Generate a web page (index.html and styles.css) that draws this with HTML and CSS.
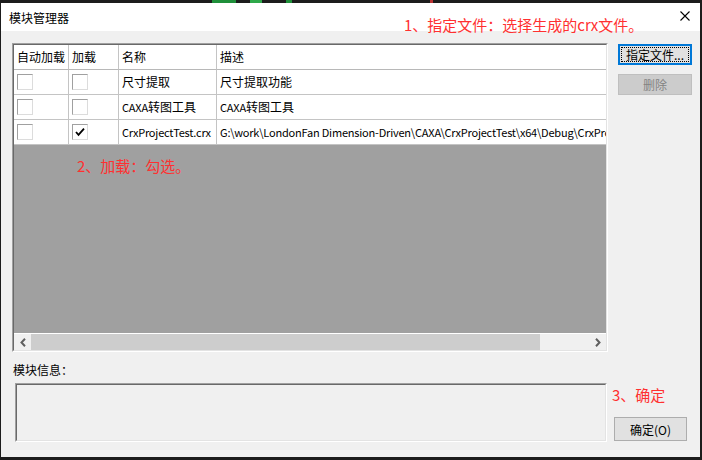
FILE: index.html
```html
<!DOCTYPE html>
<html lang="zh-CN">
<head>
    <meta charset="UTF-8">
    <title>模块管理器</title>
    <link rel="stylesheet" href="styles.css">
</head>
<body>
    <div class="screen">
        <div class="window">
            <div class="titlebar">
                <span class="title">模块管理器</span>
                <svg class="close" width="10" height="10" viewBox="0 0 10 10">
                    <path d="M0.5 0.5 L9.5 9.5 M9.5 0.5 L0.5 9.5" stroke="#000" stroke-width="1.1" fill="none"/>
                </svg>
            </div>

            <div class="client">
                <div class="top">
                    <div class="list">
                        <div class="list-in">
                            <div class="grid">
                                <div class="cell head">自动加载</div>
                                <div class="cell head">加载</div>
                                <div class="cell head">名称</div>
                                <div class="cell head">描述</div>

                                <div class="cell"><span class="check"></span></div>
                                <div class="cell"><span class="check"></span></div>
                                <div class="cell">尺寸提取</div>
                                <div class="cell">尺寸提取功能</div>

                                <div class="cell"><span class="check"></span></div>
                                <div class="cell"><span class="check"></span></div>
                                <div class="cell"><span class="lat">CAXA</span>转图工具</div>
                                <div class="cell"><span class="lat">CAXA</span>转图工具</div>

                                <div class="cell"><span class="check"></span></div>
                                <div class="cell">
                                    <span class="check">
                                        <svg width="14" height="14" viewBox="0 0 14 14">
                                            <path d="M3 7 L5.5 9.8 L11 3.6" stroke="#000" stroke-width="1.8" fill="none"/>
                                        </svg>
                                    </span>
                                </div>
                                <div class="cell"><span class="lat">CrxProjectTest.crx</span></div>
                                <div class="cell"><span class="lat">G:\work\LondonFan Dimension-Driven\CAXA\CrxProjectTest\x64\Debug\CrxProjectTest.crx</span></div>
                            </div>
                            <div class="workspace"></div>
                            <div class="hscroll">
                                <div class="arrow">
                                    <svg width="8" height="9" viewBox="0 0 8 9"><path d="M6 0.8 L2.5 4.5 L6 8.2" stroke="#606060" stroke-width="2" fill="none"/></svg>
                                </div>
                                <div class="thumb"></div>
                                <div class="track"></div>
                                <div class="arrow">
                                    <svg width="8" height="9" viewBox="0 0 8 9"><path d="M2 0.8 L5.5 4.5 L2 8.2" stroke="#606060" stroke-width="2" fill="none"/></svg>
                                </div>
                            </div>
                        </div>
                    </div>
                    <div class="side">
                        <button class="btn default">指定文件...</button>
                        <button class="btn disabled">删除</button>
                    </div>
                </div>

                <div class="info-label">模块信息：</div>

                <div class="bottom">
                    <div class="info"><div class="info-in"></div></div>
                    <button class="btn ok">确定(O)</button>
                </div>
            </div>

            <div class="note note-1">1、指定文件：选择生成的crx文件。</div>
            <div class="note note-2">2、加载：勾选。</div>
            <div class="note note-3">3、确定</div>
        </div>
    </div>
</body>
</html>
```

FILE: styles.css
```css
body {
    margin: 0;
    font-family: "Noto Sans CJK SC", "Noto Sans", sans-serif;
    font-size: 12px;
    color: #000;
    background: #1c1c1c;
}
.screen {
    width: 702px;
    height: 460px;
    padding: 3px 0 0 1px;
    box-sizing: border-box;
    background:
        linear-gradient(to right, transparent 212px, #1f8f3a 212px, #1f8f3a 236px, transparent 236px,
            transparent 250px, #2fa84a 250px, #2fa84a 262px, transparent 262px,
            transparent 286px, #1f8f3a 286px, #1f8f3a 292px, transparent 292px,
            transparent 430px, #b33 430px, #b33 433px, transparent 433px) top / 100% 3px no-repeat,
        #1c1c1c;
    overflow: hidden;
}
.window {
    position: relative;
    width: 699px;
    height: 454px;
    background: #f0f0f0;
}
.titlebar {
    height: 28px;
    background: #fff;
    display: flex;
    align-items: center;
    justify-content: space-between;
    padding: 0 10px 0 8px;
}
.title {
    line-height: 17px;
}
.close {
    margin-bottom: 2px;
}
.client {
    padding: 12px 0 0 11px;
}
.top {
    display: flex;
    gap: 10px;
    height: 309px;
}
.list {
    width: 596px;
    height: 309px;
    box-sizing: border-box;
    border: 1px solid;
    border-color: #a0a0a0 #fff #fff #a0a0a0;
}
.list-in {
    height: 100%;
    box-sizing: border-box;
    border: 1px solid;
    border-color: #696969 #e3e3e3 #e3e3e3 #696969;
    display: flex;
    flex-direction: column;
    overflow: hidden;
    background: #a0a0a0;
}
.grid {
    display: grid;
    grid-template-columns: 55px 50px 98px 1fr;
    grid-auto-rows: 25px;
    background: #fff;
}
.cell {
    box-sizing: border-box;
    border-right: 1px solid #c4c4c4;
    border-bottom: 1px solid #c4c4c4;
    padding: 0 3px;
    line-height: 24px;
    white-space: nowrap;
    overflow: hidden;
    display: flex;
    align-items: center;
}
.cell:nth-child(4n) {
    border-right: none;
    overflow: visible;
}
.lat {
    font-size: 11px;
    letter-spacing: -0.2px;
}
.head {
    border-bottom-color: #b8b8b8;
}
.check {
    display: block;
    width: 14px;
    height: 14px;
    border: 1px solid;
    border-color: #a0a0a0 #dcdcdc #dcdcdc #a0a0a0;
    background: #fff;
    margin-top: -1px;
}
.check svg {
    display: block;
}
.workspace {
    flex: 1;
    background: #a0a0a0;
}
.hscroll {
    height: 17px;
    box-sizing: border-box;
    border-top: 1px solid #fff;
    display: flex;
    background: #f0f0f0;
}
.arrow {
    width: 17px;
    display: flex;
    align-items: center;
    justify-content: center;
}
.thumb {
    width: 509px;
    background: #cdcdcd;
}
.track {
    flex: 1;
}
.side {
    display: flex;
    flex-direction: column;
    gap: 9px;
    padding-top: 1px;
}
.btn {
    font-family: inherit;
    font-size: 12px;
    padding: 0;
    box-sizing: border-box;
    background: #e1e1e1;
    border: 1px solid #adadad;
    color: #000;
    width: 74px;
    height: 21px;
    line-height: 17px;
}
.default {
    border: 2px solid #0078d7;
    outline: 1px dotted #000;
    outline-offset: -4px;
}
.disabled {
    background: #cccccc;
    border-color: #bfbfbf;
    color: #838383;
}
.info-label {
    margin: 9px 0 0 1px;
    line-height: 17px;
}
.bottom {
    display: flex;
    align-items: flex-start;
    gap: 7px;
    margin: 5px 0 0 3px;
}
.info {
    width: 592px;
    height: 59px;
    box-sizing: border-box;
    border: 1px solid;
    border-color: #a0a0a0 #fff #fff #a0a0a0;
}
.info-in {
    height: 100%;
    box-sizing: border-box;
    border: 1px solid;
    border-color: #696969 #e3e3e3 #e3e3e3 #696969;
}
.ok {
    width: 73px;
    height: 24px;
    margin-top: 34px;
}
.note {
    position: absolute;
    color: #ff3030;
    font-size: 15px;
    line-height: 16px;
    white-space: nowrap;
}
.note-1 { left: 403px; top: 14px; }
.note-2 { left: 76px; top: 155px; }
.note-3 { left: 611px; top: 384px; }
```
